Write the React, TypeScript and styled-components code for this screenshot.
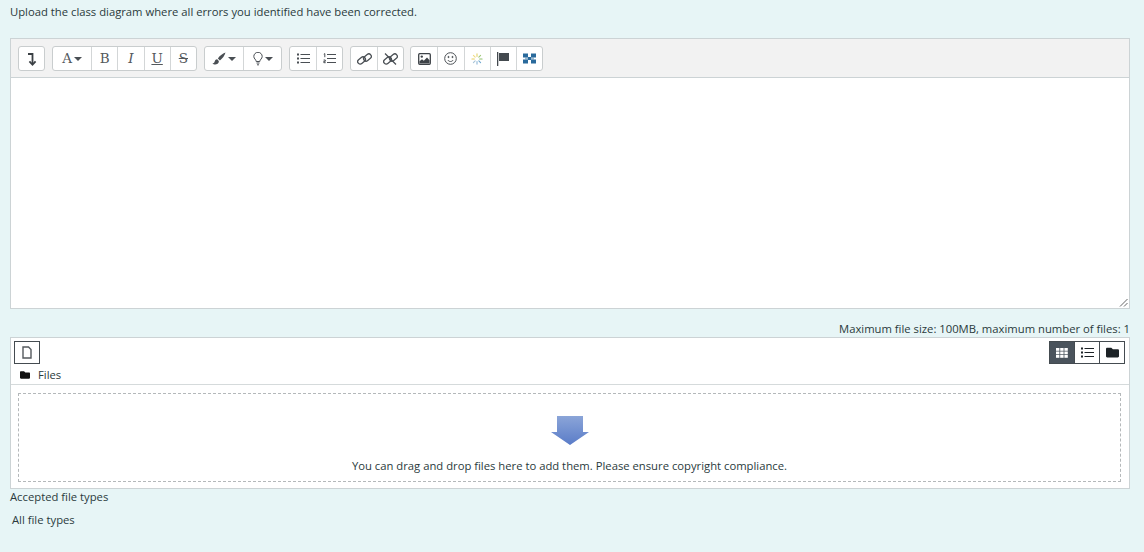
import React from 'react'
import styled, { createGlobalStyle } from 'styled-components'
import { FaFolder } from 'react-icons/fa'

const GlobalStyle = createGlobalStyle`
  html, body {
    margin: 0;
    padding: 0;
    background: #e7f5f6;
    font-family: "Open Sans", "Liberation Sans", sans-serif;
    font-size: 11.27px;
    color: #2a3a3c;
  }
`

const Page = styled.div`
  display: flex;
  flex-direction: column;
  width: 1120px;
  height: 552px;
  padding: 0 14px 0 10px;
`

const Intro = styled.p`
  margin: 0;
  height: 38px;
  padding-top: 4px;
  line-height: 16px;
  box-sizing: border-box;
`

const Editor = styled.div`
  height: 271px;
  border: 1px solid #ccd3d5;
  box-sizing: border-box;
  display: flex;
  flex-direction: column;
  background: #fff;
  position: relative;
`

const Toolbar = styled.div`
  display: flex;
  gap: 7px;
  height: 39px;
  padding: 7px 0 0 7px;
  box-sizing: border-box;
  background: #f2f2f2;
  border-bottom: 1px solid #ccd3d5;
`

const Group = styled.div<{ $tight?: boolean }>`
  display: flex;
  height: 25px;
  margin-left: ${({ $tight }) => ($tight ? '-1px' : '0')};
  background: #fff;
  border: 1px solid #c9cdce;
  border-radius: 3px;
  box-sizing: border-box;
`

const buttonWidths = { narrow: '25px', wide: '38px', letter: '26.25px', regular: '26px' }

const ToolButton = styled.div<{ $size?: keyof typeof buttonWidths }>`
  width: ${({ $size }) => buttonWidths[$size ?? 'regular']};
  display: flex;
  align-items: center;
  justify-content: center;
  gap: 2px;
  color: #4a4f54;
  border-left: 1px solid #d3d6d7;
  box-sizing: border-box;
  &:first-child {
    border-left: none;
  }
`

const Letter = styled.span<{ $italic?: boolean; $under?: boolean; $strike?: boolean }>`
  font-family: "DejaVu Serif", "Liberation Serif", serif;
  font-size: 13.5px;
  line-height: 1;
  color: #53585c;
  font-style: ${({ $italic }) => ($italic ? 'italic' : 'normal')};
  text-decoration: ${({ $under, $strike }) => ($under ? 'underline' : $strike ? 'line-through' : 'none')};
`

const Caret = styled.span`
  width: 0;
  height: 0;
  border-left: 4px solid transparent;
  border-right: 4px solid transparent;
  border-top: 4px solid #4a4f54;
`

const Grip = styled.svg`
  position: absolute;
  right: 1px;
  bottom: 1px;
`

const Limits = styled.div`
  height: 28px;
  padding-top: 12px;
  box-sizing: border-box;
  text-align: right;
  line-height: 16px;
`

const Picker = styled.div`
  height: 152px;
  border: 1px solid #ccd3d5;
  box-sizing: border-box;
  background: #fff;
  display: flex;
  flex-direction: column;
`

const PickerTop = styled.div`
  height: 47px;
  box-sizing: border-box;
  padding: 3px 3px 0 3px;
  border-bottom: 1px solid #d5dadb;
`

const PickerBar = styled.div`
  display: flex;
  justify-content: space-between;
`

const SquareButton = styled.div<{ $active?: boolean }>`
  width: 26px;
  height: 23px;
  box-sizing: border-box;
  display: flex;
  align-items: center;
  justify-content: center;
  border: 1px solid #444b50;
  background: ${({ $active }) => ($active ? '#4a535c' : '#fff')};
  color: ${({ $active }) => ($active ? '#fff' : '#1c2226')};
  & + & {
    margin-left: -1px;
  }
`

const ViewGroup = styled.div`
  display: flex;
  margin-right: 1px;
`

const Crumb = styled.div`
  display: flex;
  align-items: center;
  gap: 8px;
  height: 17px;
  padding: 2px 0 0 6px;
  margin-top: 1px;
  box-sizing: border-box;
`

const DropWrap = styled.div`
  flex: 1;
  padding: 8px 8px 6px 7px;
  display: flex;
`

const DropZone = styled.div`
  flex: 1;
  border: 1px dashed #b4b8ba;
  display: flex;
  flex-direction: column;
  align-items: center;
  padding-top: 22px;
  box-sizing: border-box;
`

const DropText = styled.div`
  margin-top: 12px;
  line-height: 16px;
`

const TypesLabel = styled.div`
  height: 23px;
  line-height: 16px;
`

const TypesValue = styled.div`
  padding-left: 2px;
  line-height: 16px;
`

const CreateFileIcon = () => (
  <svg width="10" height="13" viewBox="0 0 10 13" fill="none" stroke="#555a5e" strokeWidth="1.4">
    <path d="M1 1h5.500L9 3.500V12H1z" />
  </svg>
)

const IndentIcon = () => (
  <svg width="12" height="16" viewBox="0 0 12 16" fill="none" stroke="#3a3f44" strokeWidth="1.8">
    <path d="M2 3h4.500v10" />
    <path d="M3.400 10.400l3.100 3.200 3.100-3.200" />
  </svg>
)

const BrushIcon = () => (
  <svg width="14" height="14" viewBox="0 0 14 14" fill="#4a4f54">
    <path d="M13.500.5c-3 1-6 3.400-7.600 6l2 1.900c2.600-1.800 4.800-4.900 5.600-7.900z" />
    <path d="M5.200 7.300c-1.900.2-2.400 1.600-2.700 2.800-.2.9-1 1.200-2 1.300 1.300 1.300 4.800 1.500 6-.6.400-.8.400-1.500.3-1.900z" />
  </svg>
)

const BulbIcon = () => (
  <svg width="10" height="14" viewBox="0 0 10 14" fill="none" stroke="#4a4f54" strokeWidth="1">
    <path d="M3.200 9.500c0-2-2.400-2.700-2.400-5a4.200 4.200 0 0 1 8.400 0c0 2.300-2.400 3-2.400 5z" />
    <path d="M3.500 11h3M4 12.800h2" />
  </svg>
)

const BulletListIcon = ({ color = '#4a4f54' }: { color?: string }) => (
  <svg width="13" height="11" viewBox="0 0 13 11" fill={color}>
    <rect x="0" y="0.500" width="2" height="2" />
    <rect x="0" y="4.500" width="2" height="2" />
    <rect x="0" y="8.500" width="2" height="2" />
    <rect x="3.500" y="1" width="9.500" height="1" />
    <rect x="3.500" y="5" width="9.500" height="1" />
    <rect x="3.500" y="9" width="9.500" height="1" />
  </svg>
)

const NumberListIcon = () => (
  <svg width="13" height="12" viewBox="0 0 13 12" fill="none" stroke="#4a4f54" strokeWidth="1">
    <path d="M.8 1.200L1.800.6v3.600M.6 7h1.700v1.300H.8v1.400h1.900" />
    <path d="M4 1.500h9M4 5.500h9M4 9.500h9" />
  </svg>
)

const LinkIcon = ({ broken }: { broken?: boolean }) => (
  <svg width="15" height="14" viewBox="0 0 15 14" fill="none" stroke="#4a4f54" strokeWidth="1.300">
    <rect x="0.300" y="6" width="8.500" height="5" rx="2.500" transform="rotate(-40 4.500 8.500)" />
    <rect x="6.200" y="3" width="8.500" height="5" rx="2.500" transform="rotate(-40 10.500 5.500)" />
    {broken && <path d="M2 1.500l11 11" />}
  </svg>
)

const ImageIcon = () => (
  <svg width="13" height="12" viewBox="0 0 13 12">
    <rect x="0.700" y="0.700" width="11.600" height="10.600" rx="1" fill="none" stroke="#3d4247" strokeWidth="1.300" />
    <circle cx="3.800" cy="3.600" r="1.200" fill="#3d4247" />
    <path d="M1.500 10.500V8.300l2.500-2 1.800 1.400L9 4.500l2.500 2.700v3.300z" fill="#3d4247" />
  </svg>
)

const SmileIcon = () => (
  <svg width="13" height="13" viewBox="0 0 13 13" fill="none" stroke="#4a4f54" strokeWidth="1">
    <circle cx="6.500" cy="6.500" r="5.800" />
    <circle cx="4.500" cy="5" r=".6" fill="#4a4f54" />
    <circle cx="8.500" cy="5" r=".6" fill="#4a4f54" />
    <path d="M3.800 8c.7 1 1.600 1.500 2.700 1.500S8.500 9 9.200 8" />
  </svg>
)

const SpinnerIcon = () => (
  <svg width="12" height="12" viewBox="0 0 13 13" strokeWidth="1.200" strokeLinecap="round">
    <path d="M6.500 1v2.600" stroke="#e3d36b" />
    <path d="M6.500 9.400V12" stroke="#8fb7d8" />
    <path d="M1 6.500h2.600" stroke="#e6cf62" />
    <path d="M9.400 6.500H12" stroke="#8ec06c" />
    <path d="M2.600 2.600l1.900 1.900" stroke="#f0dc80" />
    <path d="M8.500 8.500l1.900 1.900" stroke="#6fa8cf" />
    <path d="M10.400 2.600L8.500 4.500" stroke="#a0c878" />
    <path d="M4.500 8.500l-1.900 1.900" stroke="#a8c4d8" />
  </svg>
)

const FlagIcon = () => (
  <svg width="12" height="14" viewBox="0 0 12 14" fill="#444a4f">
    <rect x="0" y="0" width="1.300" height="14" />
    <path d="M2 1h10v8H2z" />
  </svg>
)

const BlocksIcon = () => (
  <svg width="13" height="11" viewBox="0 0 13 11" fill="#2a6a9c">
    <rect x="0" y="0.500" width="5" height="4" />
    <rect x="8" y="0.500" width="5" height="4" />
    <rect x="0" y="6.500" width="5" height="4" />
    <rect x="8" y="6.500" width="5" height="4" />
    <rect x="5" y="4" width="3" height="3" />
    <rect x="2" y="4.500" width="9" height="2" opacity=".45" />
  </svg>
)

const GridIcon = () => (
  <svg width="12" height="10" viewBox="0 0 12 10" fill="#fff">
    {[0, 4.200, 8.400].map((x) =>
      [0, 3.500, 7].map((y) => <rect key={`${x}-${y}`} x={x} y={y} width="3.400" height="2.800" />),
    )}
  </svg>
)

const DownArrow = () => (
  <svg width="38" height="30" viewBox="0 0 38 30">
    <defs>
      <linearGradient id="arrowFill" x1="0" y1="0" x2="0" y2="1">
        <stop offset="0" stopColor="#8ba5d8" />
        <stop offset="1" stopColor="#5a7cc8" />
      </linearGradient>
    </defs>
    <path d="M6 0h26v16h6L19 29 0 16h6z" fill="url(#arrowFill)" />
  </svg>
)

export default function App() {
  return (
    <Page>
      <GlobalStyle />
      <Intro>Upload the class diagram where all errors you identified have been corrected.</Intro>

      <Editor>
        <Toolbar>
          <Group>
            <ToolButton $size="narrow"><IndentIcon /></ToolButton>
          </Group>
          <Group>
            <ToolButton $size="wide"><Letter>A</Letter><Caret /></ToolButton>
            <ToolButton $size="letter"><Letter>B</Letter></ToolButton>
            <ToolButton $size="letter"><Letter $italic>I</Letter></ToolButton>
            <ToolButton $size="letter"><Letter $under>U</Letter></ToolButton>
            <ToolButton $size="letter"><Letter $strike>S</Letter></ToolButton>
          </Group>
          <Group>
            <ToolButton $size="wide"><BrushIcon /><Caret /></ToolButton>
            <ToolButton $size="wide"><BulbIcon /><Caret /></ToolButton>
          </Group>
          <Group>
            <ToolButton><BulletListIcon /></ToolButton>
            <ToolButton><NumberListIcon /></ToolButton>
          </Group>
          <Group>
            <ToolButton><LinkIcon /></ToolButton>
            <ToolButton><LinkIcon broken /></ToolButton>
          </Group>
          <Group $tight>
            <ToolButton $size="letter"><ImageIcon /></ToolButton>
            <ToolButton $size="letter"><SmileIcon /></ToolButton>
            <ToolButton $size="letter"><SpinnerIcon /></ToolButton>
            <ToolButton $size="letter"><FlagIcon /></ToolButton>
            <ToolButton $size="letter"><BlocksIcon /></ToolButton>
          </Group>
        </Toolbar>
        <Grip width="9" height="9" viewBox="0 0 9 9" stroke="#666" strokeWidth="1">
          <path d="M1 8.500L8.500 1M5 8.500L8.500 5" />
        </Grip>
      </Editor>

      <Limits>Maximum file size: 100MB, maximum number of files: 1</Limits>

      <Picker>
        <PickerTop>
          <PickerBar>
            <SquareButton><CreateFileIcon /></SquareButton>
            <ViewGroup>
              <SquareButton $active><GridIcon /></SquareButton>
              <SquareButton><BulletListIcon color="#1c2226" /></SquareButton>
              <SquareButton><FaFolder size={13} /></SquareButton>
            </ViewGroup>
          </PickerBar>
          <Crumb>
            <FaFolder size={10} color="#111" />
            <span>Files</span>
          </Crumb>
        </PickerTop>
        <DropWrap>
          <DropZone>
            <DownArrow />
            <DropText>You can drag and drop files here to add them. Please ensure copyright compliance.</DropText>
          </DropZone>
        </DropWrap>
      </Picker>

      <TypesLabel>Accepted file types</TypesLabel>
      <TypesValue>All file types</TypesValue>
    </Page>
  )
}
